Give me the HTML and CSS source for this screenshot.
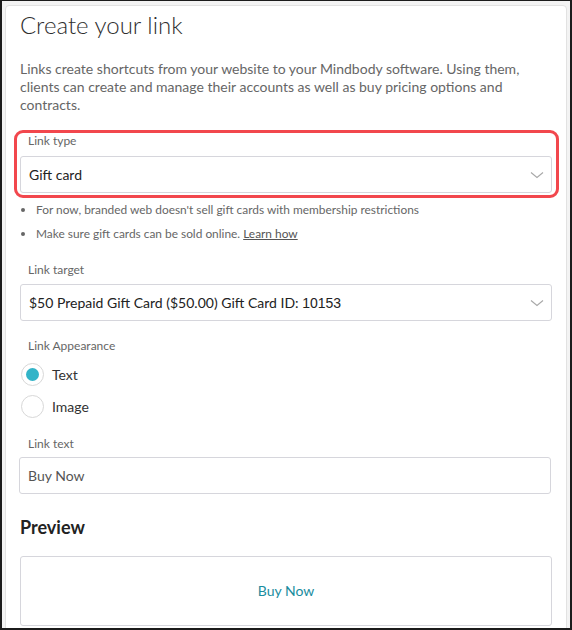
FILE: index.html
```html
<!DOCTYPE html>
<html>
<head>
<meta charset="utf-8">
<link rel="stylesheet" href="styles.css">
</head>
<body>
<div class="frame">
  <div class="card">
    <h1 class="title">Create your link</h1>
    <p class="desc">Links create shortcuts from your website to your Mindbody software. Using them, clients can create and manage their accounts as well as buy pricing options and contracts.</p>

    <div class="field highlight">
      <div class="label">Link type</div>
      <div class="select">
        <span class="value">Gift card</span>
        <svg class="chev" width="14" height="8" viewBox="0 0 14 8"><path d="M1 1.5 L7 6.5 L13 1.5" fill="none" stroke="#a8a8a8" stroke-width="1.1"/></svg>
      </div>
    </div>

    <ul class="notes">
      <li>For now, branded web doesn't sell gift cards with membership restrictions</li>
      <li>Make sure gift cards can be sold online. <span class="link">Learn how</span></li>
    </ul>

    <div class="field target">
      <div class="label">Link target</div>
      <div class="select">
        <span class="value">$50 Prepaid Gift Card ($50.00) Gift Card ID: <span class="num">10153</span></span>
        <svg class="chev" width="14" height="8" viewBox="0 0 14 8"><path d="M1 1.5 L7 6.5 L13 1.5" fill="none" stroke="#a8a8a8" stroke-width="1.1"/></svg>
      </div>
    </div>

    <div class="field appearance">
      <div class="label">Link Appearance</div>
      <div class="radios">
        <div class="radio-row"><span class="radio checked"></span><span class="radio-label">Text</span></div>
        <div class="radio-row"><span class="radio"></span><span class="radio-label">Image</span></div>
      </div>
    </div>

    <div class="field linktext">
      <div class="label">Link text</div>
      <div class="input">Buy Now</div>
    </div>

    <h2 class="preview-title">Preview</h2>
    <div class="preview">
      <span class="preview-link">Buy Now</span>
    </div>
  </div>
</div>
</body>
</html>
```
FILE: styles.css
```css
* { box-sizing: border-box; }
html, body { margin: 0; padding: 0; }
body {
  font-family: Lato, "Open Sans", sans-serif;
  background: #111;
}
.frame {
  width: 572px;
  height: 630px;
  border: 2px solid #1b1b1b;
  border-top-width: 1px;
  background: #f3f3f3;
  padding: 4px 3px 0 3px;
  overflow: hidden;
}
.card {
  background: #fff;
  border: 1px solid #e2e2e2;
  border-radius: 4px;
  padding: 4px 14px 40px 14px;
  width: 562px;
}
.title {
  margin: 0;
  font-size: 24px;
  font-weight: 300;
  line-height: 30px;
  color: #2e2e2e;
}
.desc {
  margin: 20px 0 0 0;
  font-size: 14px;
  line-height: 18px;
  color: #666;
}
.label {
  font-size: 12px;
  line-height: 16px;
  color: #666;
  padding-left: 8px;
  margin-bottom: 7px;
}
.select, .input {
  height: 37px;
  border: 1px solid #d6d6dc;
  border-radius: 3px;
  display: flex;
  align-items: center;
  justify-content: space-between;
  padding: 0 7px 0 8px;
  font-size: 14px;
  color: #222;
}
.num { font-family: "Liberation Sans", Arial, sans-serif; }
.chev { display: block; }
.highlight {
  margin: 16px -7px 0 -6px;
  border: 3px solid #f2474d;
  border-radius: 9px;
  padding: 0 4px 2px 3px;
}
.notes {
  margin: 4px 0 0 0;
  padding: 0 0 0 16px;
  font-size: 11.9px;
  line-height: 16px;
  color: #666;
}
.notes li { margin-bottom: 8px; }
.notes li:last-child { margin-bottom: 0; }
.link { text-decoration: underline; color: #555; }
.target { margin-top: 20px; }
.target .label { margin-bottom: 6px; }
.appearance { margin-top: 17px; }
.appearance .label { margin-bottom: 4px; }
.radio-row {
  height: 32px;
  display: flex;
  align-items: center;
  gap: 8px;
  padding-left: 1px;
}
.radio {
  width: 23px;
  height: 23px;
  border: 1px solid #d8d8d8;
  border-radius: 50%;
  display: flex;
  align-items: center;
  justify-content: center;
  background: #fff;
}
.radio.checked::after {
  content: "";
  width: 13px;
  height: 13px;
  border-radius: 50%;
  background: #33b4c8;
}
.radio-label { font-size: 14px; color: #333; }
.linktext { margin-top: 14px; }
.linktext .label { margin-bottom: 5px; }
.input { color: #555; margin-left: -1px; margin-right: 1px; }
.preview-title {
  margin: 21px 0 0 0;
  font-size: 18px;
  font-weight: 700;
  line-height: 24px;
  color: #222;
}
.preview {
  margin-top: 17px;
  border: 1px solid #d6d6dc;
  border-radius: 3px;
  padding: 24px 0;
  text-align: center;
  font-size: 14px;
  line-height: 20px;
}
.preview-link { color: #1a8c9e; }
```
